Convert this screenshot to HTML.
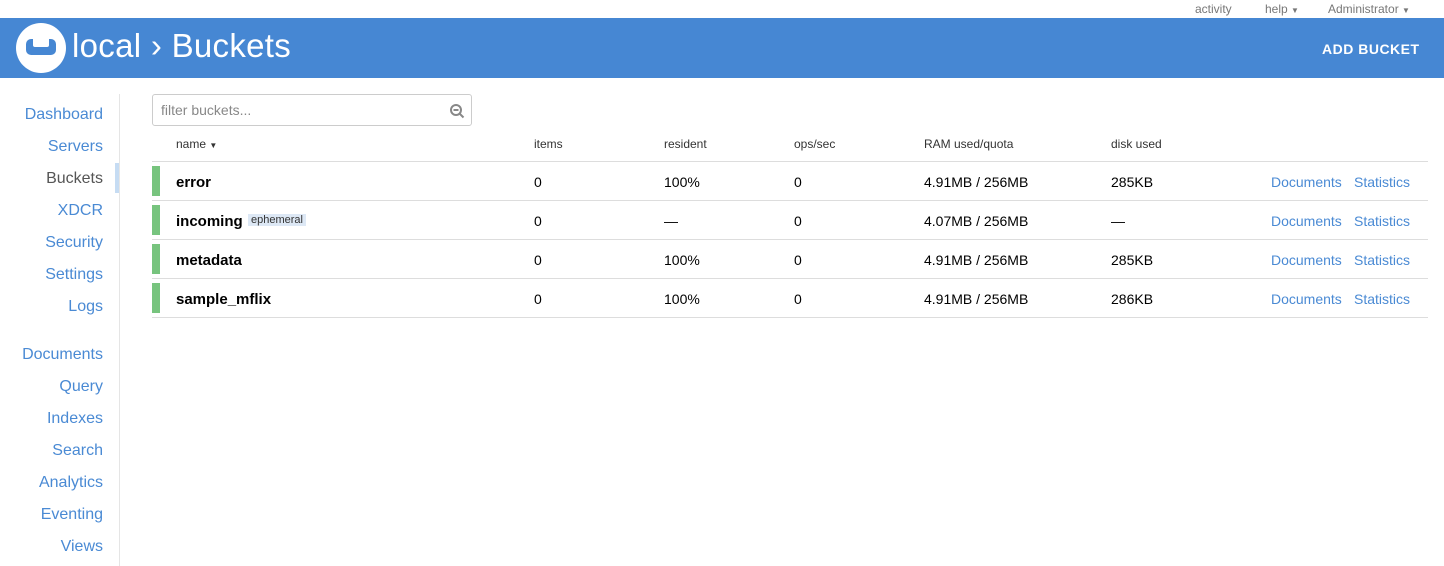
<!DOCTYPE html>
<html><head><meta charset="utf-8"><style>
*{margin:0;padding:0;box-sizing:border-box}
body{width:1444px;height:566px;overflow:hidden;background:#fff;font-family:"Liberation Sans",sans-serif;position:relative;color:#000}
.abs{position:absolute;white-space:nowrap}
.top{font-size:12px;color:#777;top:2px}
.hdr{position:absolute;left:0;top:18px;width:1444px;height:60px;background:#4687d3}
.nav{position:absolute;right:1341px;font-size:16px;color:#4a8ad4;text-align:right}
.th{font-size:12px;color:#333;top:137px}
.line{position:absolute;left:152px;width:1276px;height:1px;background:#ddd}
.bar{position:absolute;left:152px;width:8px;height:30px;background:#77c47e}
.c{position:absolute;font-size:14px;color:#000}
.n{font-weight:bold;font-size:15px}
.lk{color:#4a8ad4}
</style></head><body>
<div class="abs top" style="left:1195px">activity</div>
<div class="abs top" style="left:1265px">help <span style="font-size:8px">▼</span></div>
<div class="abs top" style="left:1328px">Administrator <span style="font-size:8px">▼</span></div>
<div class="hdr">
 <div class="abs" style="left:16px;top:5px;width:50px;height:50px;border-radius:50%;background:#fff"></div>
 <div class="abs" style="left:26px;top:21px;width:30px;height:16px;border-radius:5px;background:#4687d3"></div>
 <div class="abs" style="left:33px;top:21px;width:16px;height:8px;background:#fff;border-radius:0 0 2px 2px"></div>
 <div class="abs" style="left:72px;top:9px;font-size:33px;color:#fff;letter-spacing:0.3px">local › Buckets</div>
 <div class="abs" style="left:1322px;top:23px;font-size:14px;color:#fff;font-weight:bold;letter-spacing:0.5px">ADD BUCKET</div>
</div>
<div class="abs" style="left:119px;top:94px;width:1px;height:472px;background:#e5e5e5"></div>
<div class="abs" style="left:115px;top:163px;width:4px;height:30px;background:#c6dcf3"></div>
<div class="nav" style="top:106px">Dashboard</div>
<div class="nav" style="top:138px">Servers</div>
<div class="nav" style="top:170px;color:#555">Buckets</div>
<div class="nav" style="top:202px">XDCR</div>
<div class="nav" style="top:234px">Security</div>
<div class="nav" style="top:266px">Settings</div>
<div class="nav" style="top:298px">Logs</div>
<div class="nav" style="top:346px">Documents</div>
<div class="nav" style="top:378px">Query</div>
<div class="nav" style="top:410px">Indexes</div>
<div class="nav" style="top:442px">Search</div>
<div class="nav" style="top:474px">Analytics</div>
<div class="nav" style="top:506px">Eventing</div>
<div class="nav" style="top:538px">Views</div>
<div class="abs" style="left:152px;top:94px;width:320px;height:32px;border:1px solid #ccc;border-radius:3px"></div>
<div class="abs" style="left:161px;top:102px;font-size:14px;color:#888">filter buckets...</div>
<svg class="abs" style="left:449px;top:103px" width="16" height="16" viewBox="0 0 16 16"><circle cx="7" cy="7" r="5" fill="none" stroke="#888" stroke-width="2"/><path d="M4.5 7h5M11 11l3.5 3.5" stroke="#888" stroke-width="2"/></svg>
<div class="abs th" style="left:176px">name <span style="font-size:8px">▼</span></div>
<div class="abs th" style="left:534px">items</div>
<div class="abs th" style="left:664px">resident</div>
<div class="abs th" style="left:794px">ops/sec</div>
<div class="abs th" style="left:924px">RAM used/quota</div>
<div class="abs th" style="left:1111px">disk used</div>
<div class="line" style="top:161px"></div>
<div class="line" style="top:200px"></div>
<div class="line" style="top:239px"></div>
<div class="line" style="top:278px"></div>
<div class="line" style="top:317px"></div>
<div class="bar" style="top:166px"></div>
<div class="bar" style="top:205px"></div>
<div class="bar" style="top:244px"></div>
<div class="bar" style="top:283px"></div>

<div class="c n" style="left:176px;top:174px">error</div>
<div class="c" style="left:534px;top:174px">0</div><div class="c" style="left:664px;top:174px">100%</div><div class="c" style="left:794px;top:174px">0</div><div class="c" style="left:924px;top:174px">4.91MB / 256MB</div><div class="c" style="left:1111px;top:174px">285KB</div>
<div class="c lk" style="left:1271px;top:174px">Documents</div><div class="c lk" style="left:1354px;top:174px">Statistics</div>

<div class="c n" style="left:176px;top:213px">incoming</div>
<div class="c" style="left:248px;top:214px;font-size:11px;background:#dde8f5;padding:0 3px;color:#333">ephemeral</div>
<div class="c" style="left:534px;top:213px">0</div><div class="c" style="left:664px;top:213px">—</div><div class="c" style="left:794px;top:213px">0</div><div class="c" style="left:924px;top:213px">4.07MB / 256MB</div><div class="c" style="left:1111px;top:213px">—</div>
<div class="c lk" style="left:1271px;top:213px">Documents</div><div class="c lk" style="left:1354px;top:213px">Statistics</div>

<div class="c n" style="left:176px;top:252px">metadata</div>
<div class="c" style="left:534px;top:252px">0</div><div class="c" style="left:664px;top:252px">100%</div><div class="c" style="left:794px;top:252px">0</div><div class="c" style="left:924px;top:252px">4.91MB / 256MB</div><div class="c" style="left:1111px;top:252px">285KB</div>
<div class="c lk" style="left:1271px;top:252px">Documents</div><div class="c lk" style="left:1354px;top:252px">Statistics</div>

<div class="c n" style="left:176px;top:291px">sample_mflix</div>
<div class="c" style="left:534px;top:291px">0</div><div class="c" style="left:664px;top:291px">100%</div><div class="c" style="left:794px;top:291px">0</div><div class="c" style="left:924px;top:291px">4.91MB / 256MB</div><div class="c" style="left:1111px;top:291px">286KB</div>
<div class="c lk" style="left:1271px;top:291px">Documents</div><div class="c lk" style="left:1354px;top:291px">Statistics</div>
</body></html>
